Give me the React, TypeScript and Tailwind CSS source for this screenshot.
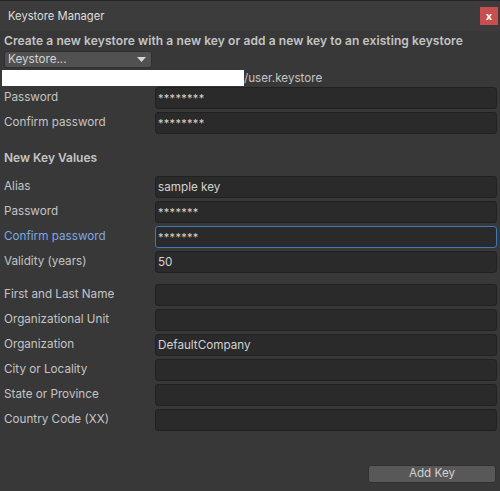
import React from "react";

const font = { fontFamily: "Inter, 'Noto Sans', sans-serif" };

function Field({
  label,
  value = "",
  focused = false,
  secret = false,
}: {
  label: string;
  value?: string;
  focused?: boolean;
  secret?: boolean;
}) {
  return (
    <div className="flex h-[22px] items-start">
      <div
        className={`w-[155px] shrink-0 pl-[4px] text-[11.7px] leading-[20px] ${
          focused ? "text-[#7ca7e4]" : "text-[#c4c4c4]"
        }`}
      >
        {label}
      </div>
      <div
        className={`h-[22px] flex-1 rounded-[3px] border bg-[#2a2a2a] pl-[2px] leading-[20px] text-[#d2d2d2] ${
          focused ? "border-[#3a79bb]" : "border-[#212121]"
        } ${secret ? "text-[11px] tracking-[0.3px] text-[#bdbdbd]" : "text-[11.7px]"}`}
      >
        {value}
      </div>
    </div>
  );
}

export default function App() {
  return (
    <div className="flex h-[491px] w-[500px] flex-col bg-[#383838]" style={font}>
      {/* title bar */}
      <div className="flex h-[31px] shrink-0 items-center justify-between border-t border-[#252525] bg-[#3c3c3c] pl-[8px] pr-[2px]">
        <span className="text-[11.2px] text-[#dedede]">Keystore Manager</span>
        <div className="flex h-[18px] w-[18px] items-center justify-center bg-[#c84f4f] text-[11px] font-bold leading-none text-white">
          x
        </div>
      </div>

      <div className="flex flex-1 flex-col pr-[3px]">
        <div className="mt-[2px] pl-[4px] text-[12px] font-semibold leading-[16px] tracking-[0.09px] text-[#c4c4c4]">
          Create a new keystore with a new key or add a new key to an existing keystore
        </div>

        <div className="ml-[4px] mt-[2px] flex h-[17px] w-[148px] items-center justify-between rounded-[3px] border border-[#303030] bg-[#515151] pl-[3px] pr-[5px] text-[11.7px] text-[#d2d2d2]">
          <span>Keystore...</span>
          <svg width="9" height="6" viewBox="0 0 9 6">
            <path d="M0 0 L9 0 L4.5 5 Z" fill="#d6d6d6" />
          </svg>
        </div>

        <div className="mt-[2px] flex h-[16px] items-center">
          <div className="ml-[2px] h-[16px] w-[242px] bg-white" />
          <span className="text-[11.7px] leading-[16px] text-[#c4c4c4]">/user.keystore</span>
        </div>

        <div className="mt-[1px] flex flex-col gap-[3px]">
          <Field label="Password" value="********" secret />
          <Field label="Confirm password" value="********" secret />
        </div>

        <div className="mt-[16px] pl-[4px] text-[12px] font-semibold leading-[16px] text-[#c4c4c4]">
          New Key Values
        </div>

        <div className="mt-[10px] flex flex-col gap-[3px]">
          <Field label="Alias" value="sample key" />
          <Field label="Password" value="*******" secret />
          <Field label="Confirm password" value="*******" focused secret />
          <Field label="Validity (years)" value="50" />
        </div>

        <div className="mt-[11px] flex flex-col gap-[3px]">
          <Field label="First and Last Name" />
          <Field label="Organizational Unit" />
          <Field label="Organization" value="DefaultCompany" />
          <Field label="City or Locality" />
          <Field label="State or Province" />
          <Field label="Country Code (XX)" />
        </div>

        <div className="mt-[34px] flex justify-end pr-[1px]">
          <div className="flex h-[18px] w-[128px] items-center justify-center rounded-[3px] border border-[#303030] bg-[#585858] text-[11.7px] text-[#d2d2d2]">
            Add Key
          </div>
        </div>
      </div>
    </div>
  );
}
